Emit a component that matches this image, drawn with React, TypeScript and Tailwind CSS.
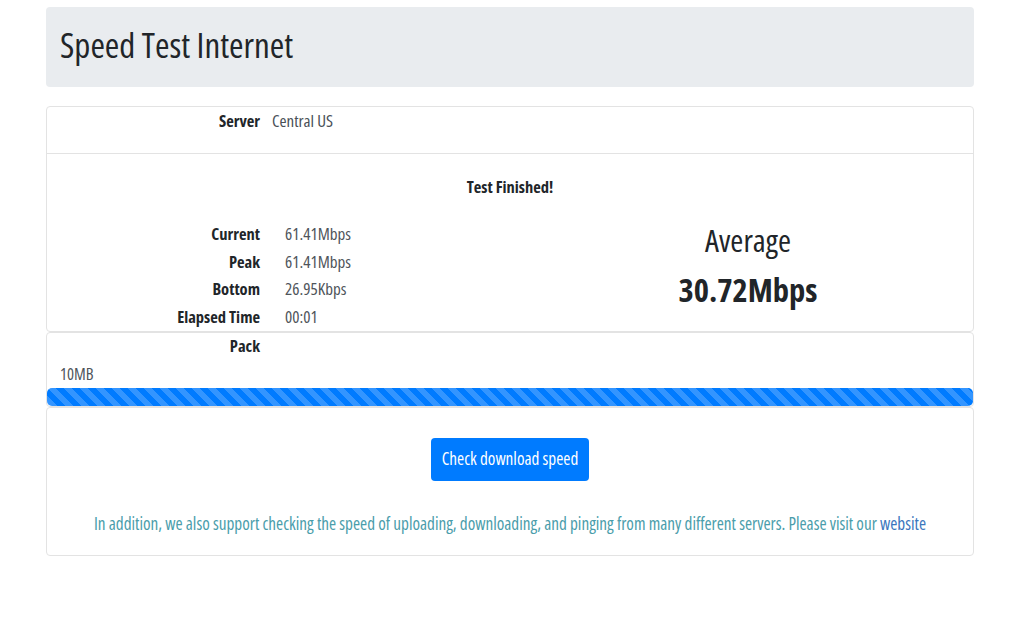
const stats = [
  { label: 'Current', value: '61.41Mbps' },
  { label: 'Peak', value: '61.41Mbps' },
  { label: 'Bottom', value: '26.95Kbps' },
  { label: 'Elapsed Time', value: '00:01' },
]

export default function App() {
  return (
    <div className="min-h-[638px] bg-white px-[46px] pt-[7px] font-['Open_Sans',sans-serif] text-[#212529] [font-stretch:75%]">
      {/* header */}
      <div className="flex h-[80px] items-center rounded bg-[#e9ecef] px-[14px] pb-[6px]">
        <h1 className="text-[35px] leading-none">Speed Test Internet</h1>
      </div>

      {/* server + results */}
      <div className="mt-[19px] rounded border border-[#e3e3e3]">
        <div className="flex h-[47px] border-b border-[#e3e3e3] pt-[2px] leading-[24px]">
          <div className="w-[213px] text-right text-[16.5px] font-bold">Server</div>
          <div className="pl-[12px] text-[17px] text-[#495057]">Central US</div>
        </div>

        <div className="pt-[21px]">
          <div className="text-center text-[16.5px] font-bold leading-[24px]">Test Finished!</div>
          <div className="mt-[21px] grid grid-cols-2">
            <div>
              {stats.map((s) => (
                <div key={s.label} className="flex leading-[27.7px]">
                  <div className="w-[213px] text-right text-[16.5px] font-bold">{s.label}</div>
                  <div className="pl-[25px] text-[17px] text-[#4f555b]">{s.value}</div>
                </div>
              ))}
            </div>
            <div className="flex flex-col items-center pl-[13px]">
              <div className="mt-[3px] text-[31.5px] leading-[34px]">Average</div>
              <div className="mt-[13px] text-[32.5px] leading-[40px] font-bold">30.72Mbps</div>
            </div>
          </div>
        </div>
      </div>

      {/* pack */}
      <div className="rounded border border-[#e3e3e3]">
        <div className="flex pt-[1px] leading-[24px]">
          <div className="w-[213px] text-right text-[16.5px] font-bold">Pack</div>
        </div>
        <div className="mt-[4px] pl-[13px] text-[16.5px] leading-[24px] text-[#4f555b]">10MB</div>
        <div className="mt-[2px] h-[18px] w-full rounded-[5px] bg-[#007bff] bg-[linear-gradient(45deg,rgba(255,255,255,0.2)_25%,transparent_25%,transparent_50%,rgba(255,255,255,0.2)_50%,rgba(255,255,255,0.2)_75%,transparent_75%,transparent)] bg-[length:16px_16px]" />
      </div>

      {/* actions */}
      <div className="flex h-[149px] flex-col items-center rounded border border-[#e3e3e3] pt-[30px]">
        <button className="h-[43px] rounded bg-[#007bff] px-[11px] text-[17.2px] text-white">
          Check download speed
        </button>
        <p className="mt-[31px] text-[17.2px] leading-[24px] text-[#4a9dab]">
          In addition, we also support checking the speed of uploading, downloading, and pinging from many different servers. Please visit our{' '}
          <a href="#" className="text-[#3a76bd]">
            website
          </a>
        </p>
      </div>
    </div>
  )
}
